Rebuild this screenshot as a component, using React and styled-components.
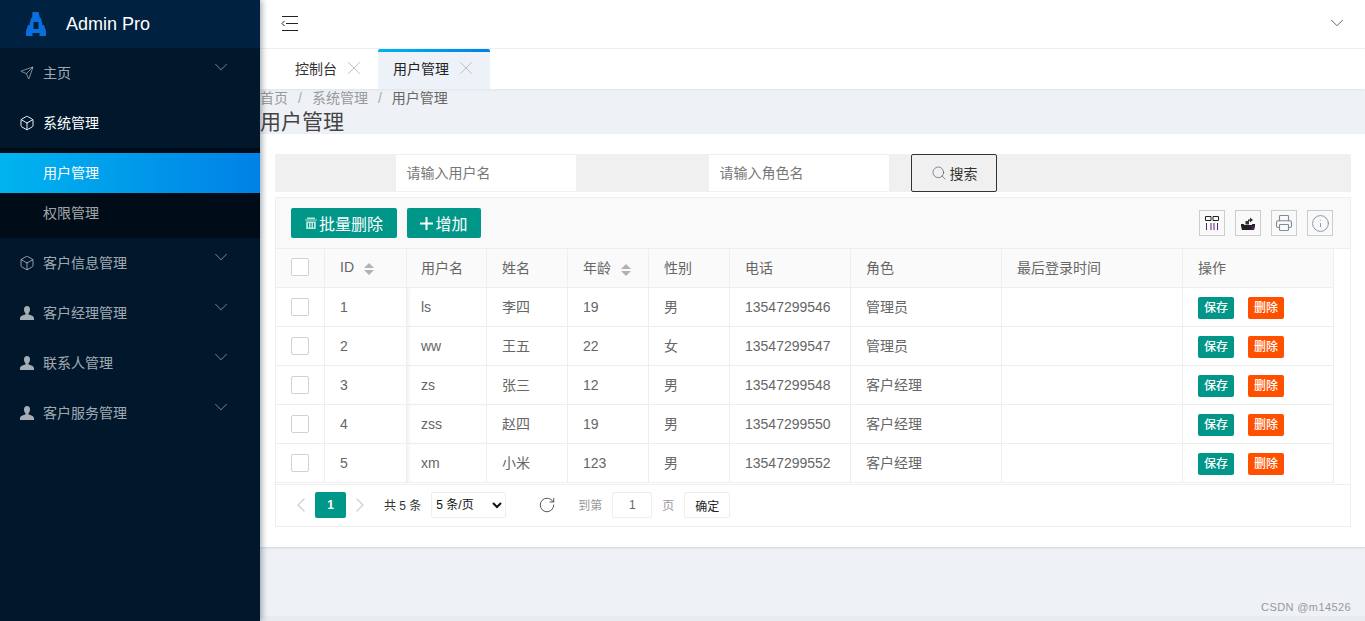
import React from 'react';
import styled, { createGlobalStyle, css } from 'styled-components';
import { Box, ChevronDown, ChevronLeft, ChevronRight, Info, Printer, RotateCw, Search, Send, X } from 'lucide-react';

const GlobalStyle = createGlobalStyle`
  html, body { margin: 0; padding: 0; height: 100%; overflow: hidden; }
  body { font-family: "Liberation Sans", "Noto Sans CJK SC", sans-serif; font-size: 14px; color: #666; }
  * { box-sizing: border-box; }
`;

const Page = styled.div`
  display: flex;
  height: 621px;
  position: relative;
`;

const Sidebar = styled.aside`
  width: 260px;
  flex: none;
  background: #00172c;
  box-shadow: 2px 0 6px rgba(0, 21, 41, 0.35);
  position: relative;
  z-index: 2;
`;

const Brand = styled.div`
  height: 48px;
  background: #002140;
  display: flex;
  align-items: center;
  padding-left: 26px;
  gap: 20px;
  color: #fff;
  font-size: 18px;
`;

const MenuItem = styled.div`
  height: 50px;
  display: flex;
  align-items: center;
  padding-left: 20px;
  gap: 9px;
  color: ${p => (p.$open ? '#fff' : 'rgba(255, 255, 255, 0.65)')};
  position: relative;
`;

const MenuIcon = styled.span`
  width: 14px;
  display: flex;
  justify-content: center;
  svg { flex: none; }
`;

const MenuLabel = styled.span`
  margin-top: -2px;
`;

const Caret = styled.span`
  position: absolute;
  right: 28px;
  top: 8px;
  display: flex;
  color: rgba(255, 255, 255, 0.4);
`;

const SubMenu = styled.div`
  background: #000c17;
  padding: 5px 0;
`;

const SubItem = styled.div`
  height: 40px;
  display: flex;
  align-items: center;
  padding: 0 0 2px 43px;
  color: ${p => (p.$active ? '#fff' : 'rgba(255, 255, 255, 0.65)')};
  background: ${p => (p.$active ? 'linear-gradient(90deg, #00b4ef, #0081e6)' : 'transparent')};
`;

const Main = styled.main`
  flex: 1;
  min-width: 0;
  display: flex;
  flex-direction: column;
  background: #eef1f5;
  position: relative;
`;

const TopBar = styled.header`
  height: 49px;
  flex: none;
  background: #fff;
  border-bottom: 1px solid #f0f0f0;
  display: flex;
  align-items: center;
  justify-content: space-between;
  padding: 0 17px 2px 21px;
  color: #555;
`;

const TabBar = styled.nav`
  height: 40px;
  flex: none;
  background: #fff;
  display: flex;
  padding-left: 20px;
  box-shadow: 0 1px 3px rgba(0, 0, 0, 0.06);
`;

const Tab = styled.div`
  width: ${p => (p.$active ? '112px' : '98px')};
  display: flex;
  align-items: center;
  padding: 0 0 2px 15px;
  gap: 6px;
  color: #333;
  position: relative;
  svg { color: #bbb; flex: none; }
  ${p => p.$active && css`
    background: #edf2f9;
    color: #222;
    &::before {
      content: '';
      position: absolute;
      left: 0;
      right: 0;
      top: 0;
      height: 3px;
      border-radius: 2px 2px 0 0;
      background: linear-gradient(90deg, #00b4ef, #0081e6);
    }
  `}
`;

const Crumbs = styled.div`
  height: 18px;
  flex: none;
  line-height: 18px;
  display: flex;
  color: #999;
  span + span::before { content: '/'; margin: 0 10px; color: #aaa; }
  span:last-child { color: #666; }
`;

const Title = styled.h1`
  margin: 0;
  height: 27px;
  line-height: 30px;
  flex: none;
  font-size: 21px;
  font-weight: 400;
  color: #444;
`;

const Content = styled.section`
  flex: none;
  height: 413px;
  background: #fff;
  padding: 20px 14px 20px 15px;
  box-shadow: 0 1px 2px rgba(0, 0, 0, 0.12);
`;

const SearchBar = styled.div`
  height: 38px;
  background: #f0f0f0;
  display: flex;
  padding-left: 121px;
`;

const SearchInput = styled.div`
  width: 180px;
  background: #fff;
  border: 1px solid #f0f0f0;
  border-width: 1px 0;
  display: flex;
  align-items: center;
  padding: 0 0 2px 10.5px;
  color: #777;
  margin-right: ${p => p.$gap}px;
`;

const SearchButton = styled.button`
  width: 86px;
  margin: 0;
  border: 1px solid #333;
  border-radius: 2px;
  background: #f0f0f0;
  color: #333;
  font: inherit;
  display: flex;
  align-items: center;
  justify-content: center;
  gap: 3px;
  padding: 0 0 1px;
  svg { color: #456; }
`;

const TableBox = styled.div`
  margin-top: 5px;
  height: 330px;
  border: 1px solid #eee;
  display: flex;
  flex-direction: column;
`;

const Toolbar = styled.div`
  height: 51px;
  flex: none;
  background: #f9f9f9;
  border-bottom: 1px solid #eee;
  display: flex;
  align-items: center;
  padding: 0 17px 0 15px;
`;

const ActionButton = styled.button`
  height: 30px;
  width: ${p => p.$width}px;
  margin-right: 10px;
  border: 0;
  border-radius: 2px;
  background: #009688;
  color: #fff;
  font: inherit;
  font-size: 16px;
  padding: 0;
  display: flex;
  align-items: center;
  justify-content: center;
  gap: 2px;
`;

const ToolIcons = styled.div`
  margin-left: auto;
  display: flex;
  gap: 10px;
`;

const ToolIcon = styled.div`
  width: 26px;
  height: 26px;
  border: 1px solid #ccc;
  display: flex;
  align-items: center;
  justify-content: center;
  color: ${p => p.$color || '#333'};
`;

const Table = styled.table`
  width: 1057px;
  table-layout: fixed;
  border-collapse: collapse;
  border-bottom: 1px solid #eee;
`;

const HeadCell = styled.th`
  height: 38px;
  padding: 0 15px 1px ${p => (p.$tight ? '14.5px' : '15.5px')};
  background: #fafafa;
  border: 1px solid #eee;
  border-top: 0;
  border-left: 0;
  text-align: left;
  font-weight: 400;
  color: #666;
  position: relative;
`;

const Cell = styled.td`
  height: 39px;
  padding: ${p => (p.$ops ? '2px' : '0')} 15px ${p => (p.$cjk ? '2px' : '0')} 15.5px;
  border: 1px solid #eee;
  border-top: 0;
  border-left: 0;
  color: #666;
  position: relative;
  ${p => p.$shade && css`
    padding-left: 14.5px;
    box-shadow: inset 4px 0 4px -3px rgba(0, 0, 0, 0.08);
  `}
`;

const CheckBox = styled.div`
  width: 18px;
  height: 18px;
  margin-left: -0.5px;
  border: 1px solid #d2d2d2;
  border-radius: 2px;
  background: #fff;
`;

const Sort = styled.span`
  display: inline-flex;
  flex-direction: column;
  gap: 2px;
  margin-left: 10px;
  vertical-align: middle;
  &::before, &::after { content: ''; border: 5px solid transparent; border-top-width: 0; border-bottom-width: 5px; border-bottom-color: #b2b2b2; }
  &::after { border-bottom-width: 0; border-top-width: 5px; border-top-color: #b2b2b2; }
`;

const RowButton = styled.span`
  display: inline-block;
  width: 36px;
  height: 22px;
  line-height: 22px;
  text-align: center;
  font-size: 12px;
  font-weight: 500;
  border-radius: 2px;
  color: #fff;
  background: ${p => (p.$danger ? '#ff5000' : '#009688')};
  margin-right: 14px;
  vertical-align: middle;
`;

const Pager = styled.div`
  flex: 1;
  margin-top: 1px;
  border-top: 1px solid #eee;
  display: flex;
  align-items: center;
  padding-left: 11px;
  font-size: 12px;
  color: #333;
`;

const PagerArrow = styled.span`
  width: 28px;
  display: flex;
  justify-content: center;
  color: #d2d2d2;
  svg { flex: none; }
`;

const PageNumber = styled.span`
  width: 31px;
  height: 26px;
  background: #009688;
  border-radius: 2px;
  color: #fff;
  font-weight: 700;
  font-size: 12px;
  display: flex;
  align-items: center;
  justify-content: center;
`;

const PagerTotal = styled.span`
  margin: -2px 0 0 10px;
`;

const PagerSelect = styled.select`
  width: 75px;
  height: 26px;
  margin: 0 32px 0 10px;
  border: 1px solid #eee;
  border-radius: 2px;
  background: #fff;
  color: #111;
  font: inherit;
`;

const Refresh = styled.span`
  display: flex;
  width: 18px;
  margin-right: 22px;
  color: #444;
`;

const Muted = styled.span`
  margin-top: -2px;
  color: #999;
`;

const PageInput = styled.span`
  width: 40px;
  height: 26px;
  margin: 0 10px;
  border: 1px solid #eee;
  border-radius: 2px;
  color: #666;
  display: flex;
  align-items: center;
  justify-content: center;
`;

const ConfirmButton = styled.span`
  width: 46px;
  height: 26px;
  margin-left: 10px;
  border: 1px solid #eee;
  border-radius: 2px;
  color: #222;
  display: flex;
  align-items: center;
  justify-content: center;
`;

const Watermark = styled.div`
  position: absolute;
  right: 14px;
  bottom: 8px;
  font-size: 11px;
  letter-spacing: 0.4px;
  color: #999;
`;

const BottomLine = styled.div`
  position: absolute;
  left: 0;
  right: 0;
  bottom: 0;
  height: 5px;
  background: #e8ebef;
`;

const Logo = () => (
  <svg width="20" height="24" viewBox="0 0 20 24" fill="#0a6fdc" fillRule="evenodd">
    <path d="M6.500 0h6L14 6h1l1.500 7H18l2 6v5h-6.500v-3h-7v3H0v-5l2-6h1.500L5 6h1zM7.500 10v7h5v-7z" />
  </svg>
);

const UserIcon = () => (
  <svg width="14" height="14" viewBox="0 0 14 14" fill="currentColor">
    <path d="M7 0c2 0 3 1.400 3 3.400 0 1.600-.7 3-1.500 3.800v1.300C11 9.300 14 10 14 12.400V14H0v-1.600C0 10 3 9.300 5.500 8.500V7.200C4.700 6.400 4 5 4 3.400 4 1.400 5 0 7 0z" />
  </svg>
);

const Outdent = () => (
  <svg width="17" height="15" viewBox="0 0 17 15" fill="none" stroke="#222" strokeWidth="1">
    <path d="M1 .5h16M5 7.500h12M1 14.500h16M3.500 5L1 7.500 3.500 10" />
  </svg>
);

const Trash = () => (
  <svg width="12" height="12" viewBox="0 0 12 12" fill="#b9e6df">
    <path d="M0 2.500h12v1H0zM2 .5h8v1.500H2zM1.200 4.500h9.600V12H1.200zM3 6v4.500h1V6zm2.500 0v4.500h1V6zM8 6v4.500h1V6z" />
  </svg>
);

const Plus = () => (
  <svg width="13" height="13" viewBox="0 0 13 13" fill="#fff">
    <path d="M5.500 0h2v5.500H13v2H7.500V13h-2V7.500H0v-2h5.500z" />
  </svg>
);

const ColsIcon = () => (
  <svg width="14" height="14" viewBox="0 0 14 14" fill="none" stroke="#5b1e78" strokeWidth="1">
    <path d="M.5.500h5.500v4H.5zM8 .5h5.500v4H8z" stroke="#222" />
    <path d="M1.500 7v7M6 7v7M9 7v7M12.500 7v7" />
  </svg>
);

const ExportIcon = () => (
  <svg width="14" height="14" viewBox="0 0 14 14">
    <path d="M0 8h2.500L3.500 9h7l1-1H14v2l-1 4H1l-1-4z" fill="#222" />
    <path d="M4.500 8.500V5h2.500V3.500h2V1.500l3 2.500-3 2.500V5H8v3.500z" fill="#333" />
    <path d="M10 10h3.500l-.5 4h-3z" fill="#5b1e78" opacity=".6" />
  </svg>
);

const menu = [
  { label: '客户信息管理', icon: <Box size={16} strokeWidth={1.3} /> },
  { label: '客户经理管理', icon: <UserIcon /> },
  { label: '联系人管理', icon: <UserIcon /> },
  { label: '客户服务管理', icon: <UserIcon /> },
];

const columns = [
  { key: 'check', width: 48 },
  { key: 'id', label: 'ID', width: 82, sort: true },
  { key: 'username', label: '用户名', width: 80 },
  { key: 'name', label: '姓名', width: 81 },
  { key: 'age', label: '年龄', width: 81, sort: true },
  { key: 'sex', label: '性别', width: 81 },
  { key: 'phone', label: '电话', width: 121 },
  { key: 'role', label: '角色', width: 151 },
  { key: 'login', label: '最后登录时间', width: 181 },
  { key: 'ops', label: '操作', width: 151 },
];

const users = [
  { id: 1, username: 'ls', name: '李四', age: 19, sex: '男', phone: '13547299546', role: '管理员' },
  { id: 2, username: 'ww', name: '王五', age: 22, sex: '女', phone: '13547299547', role: '管理员' },
  { id: 3, username: 'zs', name: '张三', age: 12, sex: '男', phone: '13547299548', role: '客户经理' },
  { id: 4, username: 'zss', name: '赵四', age: 19, sex: '男', phone: '13547299550', role: '客户经理' },
  { id: 5, username: 'xm', name: '小米', age: 123, sex: '男', phone: '13547299552', role: '客户经理' },
];

export default function App() {
  return (
    <Page>
      <GlobalStyle />
      <Sidebar>
        <Brand><Logo />Admin Pro</Brand>
        <MenuItem>
          <MenuIcon><Send size={14} strokeWidth={1.3} /></MenuIcon>
          <MenuLabel>主页</MenuLabel>
          <Caret><ChevronDown size={22} strokeWidth={1.1} /></Caret>
        </MenuItem>
        <MenuItem $open>
          <MenuIcon><Box size={16} strokeWidth={1.4} /></MenuIcon>
          <MenuLabel>系统管理</MenuLabel>
        </MenuItem>
        <SubMenu>
          <SubItem $active>用户管理</SubItem>
          <SubItem>权限管理</SubItem>
        </SubMenu>
        {menu.map(item => (
          <MenuItem key={item.label}>
            <MenuIcon>{item.icon}</MenuIcon>
            <MenuLabel>{item.label}</MenuLabel>
            <Caret><ChevronDown size={22} strokeWidth={1.1} /></Caret>
          </MenuItem>
        ))}
      </Sidebar>
      <Main>
        <TopBar>
          <Outdent />
          <ChevronDown size={22} strokeWidth={1} />
        </TopBar>
        <TabBar>
          <Tab>控制台<X size={22} strokeWidth={1} /></Tab>
          <Tab $active>用户管理<X size={22} strokeWidth={1} /></Tab>
        </TabBar>
        <Crumbs>
          <span>首页</span>
          <span>系统管理</span>
          <span>用户管理</span>
        </Crumbs>
        <Title>用户管理</Title>
        <Content>
          <SearchBar>
            <SearchInput $gap={133}>请输入用户名</SearchInput>
            <SearchInput $gap={22}>请输入角色名</SearchInput>
            <SearchButton><Search size={16} strokeWidth={1} />搜索</SearchButton>
          </SearchBar>
          <TableBox>
            <Toolbar>
              <ActionButton $width={106}><Trash />批量删除</ActionButton>
              <ActionButton $width={74}><Plus />增加</ActionButton>
              <ToolIcons>
                <ToolIcon><ColsIcon /></ToolIcon>
                <ToolIcon><ExportIcon /></ToolIcon>
                <ToolIcon $color="#7f8c99"><Printer size={18} strokeWidth={1.5} /></ToolIcon>
                <ToolIcon $color="#7a8a99"><Info size={19} strokeWidth={1.1} /></ToolIcon>
              </ToolIcons>
            </Toolbar>
            <Table>
              <colgroup>
                {columns.map(col => <col key={col.key} width={col.width} />)}
              </colgroup>
              <thead>
                <tr>
                  {columns.map(col => (
                    <HeadCell key={col.key} $tight={col.key === 'username'}>
                      {col.key === 'check' ? <CheckBox /> : col.label}
                      {col.sort && <Sort />}
                    </HeadCell>
                  ))}
                </tr>
              </thead>
              <tbody>
                {users.map(user => (
                  <tr key={user.id}>
                    <Cell><CheckBox /></Cell>
                    <Cell>{user.id}</Cell>
                    <Cell $shade>{user.username}</Cell>
                    <Cell $cjk>{user.name}</Cell>
                    <Cell>{user.age}</Cell>
                    <Cell $cjk>{user.sex}</Cell>
                    <Cell>{user.phone}</Cell>
                    <Cell $cjk>{user.role}</Cell>
                    <Cell />
                    <Cell $ops>
                      <RowButton>保存</RowButton>
                      <RowButton $danger>删除</RowButton>
                    </Cell>
                  </tr>
                ))}
              </tbody>
            </Table>
            <Pager>
              <PagerArrow><ChevronLeft size={24} strokeWidth={1.4} /></PagerArrow>
              <PageNumber>1</PageNumber>
              <PagerArrow><ChevronRight size={24} strokeWidth={1.4} /></PagerArrow>
              <PagerTotal>共 5 条</PagerTotal>
              <PagerSelect defaultValue="5">
                <option value="5">5 条/页</option>
              </PagerSelect>
              <Refresh><RotateCw size={18} strokeWidth={1.2} /></Refresh>
              <Muted>到第</Muted>
              <PageInput>1</PageInput>
              <Muted>页</Muted>
              <ConfirmButton>确定</ConfirmButton>
            </Pager>
          </TableBox>
        </Content>
        <BottomLine />
        <Watermark>CSDN @m14526</Watermark>
      </Main>
    </Page>
  );
}
